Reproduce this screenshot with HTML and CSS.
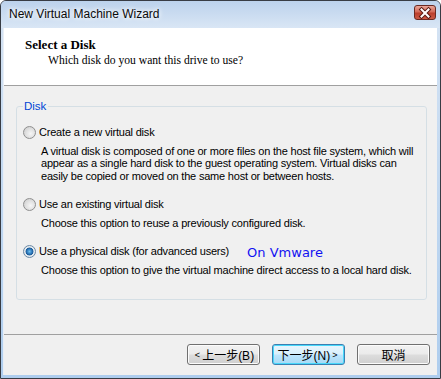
FILE: index.html
```html
<!DOCTYPE html>
<html>
<head>
<meta charset="utf-8">
<link rel="stylesheet" href="styles.css">
</head>
<body>
<div class="window">
  <div class="titlebar">
    <span class="title">New Virtual Machine Wizard</span>
    <span class="close">
      <svg width="20" height="14" viewBox="0 0 20 14">
        <path d="M6.5 3.5 L13.5 10.5 M13.5 3.5 L6.5 10.5" stroke="#5a1a12" stroke-width="4" stroke-linecap="square"/>
        <path d="M6.5 3.5 L13.5 10.5 M13.5 3.5 L6.5 10.5" stroke="#ffffff" stroke-width="2" stroke-linecap="square"/>
      </svg>
    </span>
  </div>
  <div class="client">
    <div class="header">
      <div class="h-title">Select a Disk</div>
      <div class="h-sub">Which disk do you want this drive to use?</div>
    </div>
    <div class="body">
      <fieldset class="group">
        <legend class="legend">Disk</legend>
        <div class="option">
          <div class="opt-row"><span class="radio"></span><span class="opt-label">Create a new virtual disk</span></div>
          <div class="opt-desc">A virtual disk is composed of one or more files on the host file system, which will appear as a single hard disk to the guest operating system. Virtual disks can easily be copied or moved on the same host or between hosts.</div>
        </div>
        <div class="option">
          <div class="opt-row"><span class="radio"></span><span class="opt-label">Use an existing virtual disk</span></div>
          <div class="opt-desc">Choose this option to reuse a previously configured disk.</div>
        </div>
        <div class="option">
          <div class="opt-row"><span class="radio checked"></span><span class="opt-label">Use a physical disk (for advanced users)</span><span class="note">On Vmware</span></div>
          <div class="opt-desc">Choose this option to give the virtual machine direct access to a local hard disk.</div>
        </div>
      </fieldset>
    </div>
    <div class="footer">
      <span class="btn"><span class="lt">&lt;</span> 上一步(B)</span>
      <span class="btn focused">下一步(N) <span class="lt">&gt;</span></span>
      <span class="btn">取消</span>
    </div>
  </div>
</div>
</body>
</html>
```

FILE: styles.css
```css
html, body {
  margin: 0;
  padding: 0;
  background: #ffffff;
}

.window {
  box-sizing: border-box;
  width: 441px;
  height: 379px;
  border: 1px solid #383c44;
  border-radius: 6px 6px 0 0;
  background: linear-gradient(to bottom, #c2d6ee 0px, #d3e2f3 28px, #aecdee 100%);
  display: flex;
  flex-direction: column;
  overflow: hidden;
}

.titlebar {
  height: 27px;
  flex: none;
  display: flex;
  align-items: center;
  justify-content: space-between;
  padding: 0 4px 0 8px;
  background: linear-gradient(to bottom, #bcd2ec 0%, #c9dbf0 45%, #d9e6f5 100%);
}

.title {
  font-family: "Liberation Sans", Arial, sans-serif;
  font-size: 12px;
  color: #0a0a0a;
  margin-top: -1px;
  text-shadow: 0 0 4px #ffffff, 0 0 6px #ffffff;
}

.close {
  box-sizing: border-box;
  width: 22px;
  height: 15px;
  margin-top: -4px;
  border: 1px solid #6b2a22;
  border-radius: 3px;
  background: linear-gradient(to bottom, #e9a699 0%, #d46a58 45%, #bb3f2d 55%, #cc5a46 100%);
  display: flex;
  align-items: center;
  justify-content: center;
}

.close svg {
  display: block;
}

.client {
  flex: 1;
  margin: 0 3px 3px 2px;
  background: #f0f0f0;
  display: flex;
  flex-direction: column;
  border-left: 1px solid #e8eef6;
}

.header {
  flex: none;
  height: 58px;
  background: #ffffff;
  border-bottom: 1px solid #a0a0a0;
  box-sizing: border-box;
  font-family: "Liberation Serif", "Times New Roman", serif;
  color: #000;
  padding: 9px 0 0 21px;
}

.h-title {
  font-weight: bold;
  font-size: 13px;
  line-height: 15px;
}

.h-sub {
  padding-left: 23px;
  font-size: 11.6px;
  line-height: 15px;
  margin-top: 1px;
}

.body {
  flex: 1;
  padding: 14px 10px 0 12px;
  font-family: "Liberation Sans", Arial, sans-serif;
  font-size: 11px;
  letter-spacing: -0.2px;
  color: #000;
}

.group {
  margin: 0;
  padding: 0 6px 23px 6px;
  border: 1px solid #d5dfe5;
  border-radius: 3px;
  min-width: 0;
}

.legend {
  padding: 0 2px 0 1px;
  color: #0046d5;
  font-size: 11.5px;
  letter-spacing: 0;
  line-height: 13px;
}

.option {
  margin-top: 13px;
}

.option + .option {
  margin-top: 16px;
}

.opt-row {
  display: flex;
  align-items: center;
  height: 13px;
}

.radio {
  box-sizing: border-box;
  width: 13px;
  height: 13px;
  border-radius: 50%;
  border: 1px solid #8f8f8f;
  background: radial-gradient(circle at 60% 60%, #f6f6f6 0%, #e2e2e2 45%, #c9c9c9 100%);
  margin-right: 3px;
  flex: none;
}

.radio.checked {
  border-color: #6c8aa6;
  background: radial-gradient(circle at 50% 50%, #6dc0ee 0px, #2e77b9 2.5px, #1d5b98 3.6px, #e9eef2 4.3px, #d4dadf 100%);
}

.opt-label {
  line-height: 13px;
  white-space: nowrap;
}

.note {
  margin-left: 18px;
  color: #1212f2;
  font-size: 13px;
  font-family: "DejaVu Sans", sans-serif;
  letter-spacing: 0;
  margin-top: 1px;
}

.opt-desc {
  margin: 5.5px 0 0 18px;
  line-height: 12.5px;
}

.footer {
  flex: none;
  height: 41px;
  box-sizing: border-box;
  border-top: 1px solid #a0a0a0;
  display: flex;
  justify-content: flex-end;
  align-items: flex-start;
  gap: 12px;
  padding: 9px 7px 0 0;
}

.btn {
  box-sizing: border-box;
  width: 73px;
  height: 21px;
  border: 1px solid #707070;
  border-radius: 3px;
  background: linear-gradient(to bottom, #f2f2f2 0%, #ebebeb 48%, #dddddd 52%, #cfcfcf 100%);
  box-shadow: inset 0 0 0 1px #fcfcfc;
  display: flex;
  align-items: center;
  justify-content: center;
  font-family: "Liberation Sans", "Noto Sans CJK TC", sans-serif;
  font-size: 12px;
  color: #000;
  white-space: nowrap;
}

.btn.focused {
  border-color: #3c7fb1;
  background: linear-gradient(to bottom, #eaf6fd 0%, #d9f0fc 48%, #bee6fd 52%, #a7d9f5 100%);
  box-shadow: inset 0 0 0 1px #48d8fb;
}

.lt {
  font-size: 9px;
  margin: 0 2px;
}
```
